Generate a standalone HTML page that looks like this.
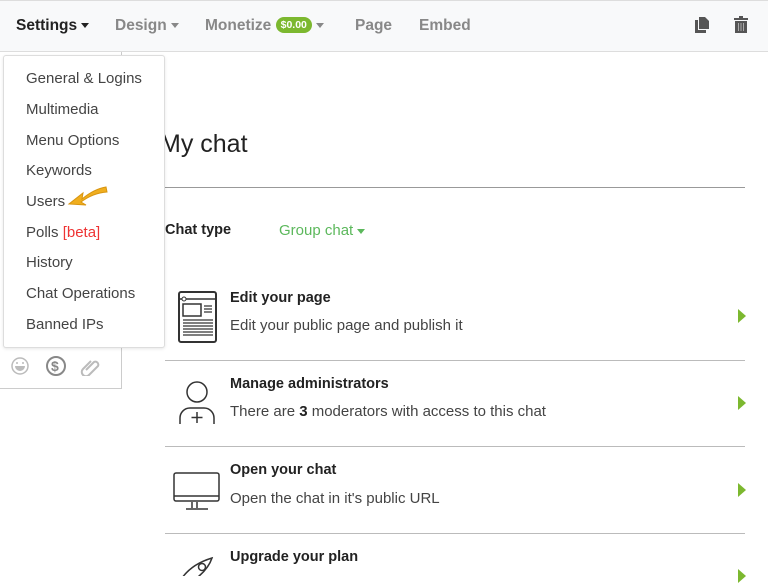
<!DOCTYPE html>
<html><head><style>
body{margin:0;width:768px;height:576px;overflow:hidden;background:#fff;font-family:"Liberation Sans",sans-serif;position:relative}
.top{position:absolute;left:0;top:0;width:768px;height:52px;background:#f8f9fa;border-bottom:1px solid #ddd;border-top:1px solid #ddd;box-sizing:border-box}
.nav{position:absolute;top:17px;font-size:15.5px;font-weight:bold;color:#888}
.car{display:inline-block;width:0;height:0;border-left:4px solid transparent;border-right:4px solid transparent;border-top:5px solid currentColor;vertical-align:middle;margin-left:4px}
.badge{display:inline-block;background:#7cb82f;color:#fff;font-size:10.5px;border-radius:8px;padding:2px 5px;vertical-align:2px}
.abs{position:absolute}
.dd{position:absolute;left:3px;top:55px;width:160px;height:291px;background:#fff;border:1px solid #ddd;border-radius:3px;box-shadow:0 1px 3px rgba(0,0,0,.1)}
.dd div{position:absolute;left:22px;font-size:15px;color:#444}
.t{position:absolute;left:230px;font-size:14.5px;font-weight:bold;color:#222}
.s{position:absolute;left:230px;font-size:15px;color:#444}
.hr{position:absolute;left:165px;width:580px;height:1px;background:#bbb}
.arr{position:absolute;left:738px;width:0;height:0;border-top:7px solid transparent;border-bottom:7px solid transparent;border-left:8px solid #7cb82f}
</style></head><body>
<div class="top"></div>
<div class="nav" style="left:16px;color:#222">Settings<span class="car"></span></div>
<div class="nav" style="left:115px">Design<span class="car"></span></div>
<div class="nav" style="left:205px">Monetize <span class="badge">$0.00</span><span class="car"></span></div>
<div class="nav" style="left:355px">Page</div>
<div class="nav" style="left:419px">Embed</div>
<svg class="abs" style="left:694px;top:16px" width="16" height="18" viewBox="0 0 16 18"><path d="M1 4h3v10h8v3H1z" fill="#555"/><path d="M5 1h6l4 4v8H5z" fill="#555"/></svg>
<svg class="abs" style="left:733px;top:16px" width="16" height="18" viewBox="0 0 16 18"><rect x="1" y="2" width="14" height="2" fill="#555"/><rect x="6" y="0" width="4" height="2" fill="#555"/><path d="M2 5h12v12H2z" fill="#555"/><path d="M5.5 7v8M8 7v8M10.5 7v8" stroke="#aaa" stroke-width="1"/></svg>
<div class="abs" style="left:0;top:52px;width:121px;height:336px;border-right:1px solid #ccc;border-bottom:1px solid #ccc"></div>
<svg class="abs" style="left:10px;top:356px" width="100" height="20"><circle cx="10" cy="10" r="8" fill="none" stroke="#bbb" stroke-width="1.5"/><path d="M5 10a5 5 0 0 0 10 0z" fill="#bbb"/><circle cx="7" cy="7" r="1" fill="#bbb"/><circle cx="13" cy="7" r="1" fill="#bbb"/><circle cx="46" cy="10" r="9" fill="none" stroke="#888" stroke-width="2"/><text x="41" y="15" font-size="14" font-weight="bold" fill="#888" font-family="Liberation Sans">$</text><path d="M76 14l8-8a3 3 0 0 1 4 4l-9 9a4 4 0 0 1-6-6l8-8" fill="none" stroke="#bbb" stroke-width="2"/></svg>
<div class="abs" style="left:160px;top:130px;font-size:25px;color:#222">My chat</div>
<div class="abs" style="left:165px;top:187px;width:580px;height:1px;background:#999"></div>
<div class="abs" style="left:165px;top:222px;font-size:14.5px;font-weight:bold;color:#222">Chat type</div>
<div class="abs" style="left:279px;top:222px;font-size:15px;color:#5cb85c">Group chat<span class="car"></span></div>
<svg class="abs" style="left:178px;top:291px" width="40" height="53" viewBox="0 0 40 53"><rect x="1" y="1" width="37" height="50" rx="2" fill="none" stroke="#333" stroke-width="2"/><path d="M1 8h37" stroke="#333" stroke-width="1.5"/><circle cx="6" cy="8" r="2" fill="#fff" stroke="#333"/><rect x="5" y="13" width="18" height="12" fill="none" stroke="#333" stroke-width="1.5"/><path d="M26 15h8M26 18h8M26 21h8M5 29h30M5 32h30M5 35h30M5 38h30M5 41h30M5 44h30" stroke="#333" stroke-width="1.3"/></svg>
<div class="t" style="top:290px">Edit your page</div>
<div class="s" style="top:317px">Edit your public page and publish it</div>
<div class="arr" style="top:309px"></div>
<div class="hr" style="top:360px"></div>
<svg class="abs" style="left:178px;top:380px" width="38" height="46" viewBox="0 0 38 46"><circle cx="19" cy="12" r="10" fill="none" stroke="#333" stroke-width="1.5"/><path d="M2 44v-6a10 10 0 0 1 10-10h14a10 10 0 0 1 10 10v6" fill="none" stroke="#333" stroke-width="1.5"/><path d="M19 32v11M13.5 37.5h11" stroke="#333" stroke-width="1.5"/></svg>
<div class="t" style="top:376px">Manage administrators</div>
<div class="s" style="top:403px">There are <b style="color:#222">3</b> moderators with access to this chat</div>
<div class="arr" style="top:396px"></div>
<div class="hr" style="top:446px"></div>
<svg class="abs" style="left:173px;top:472px" width="48" height="40" viewBox="0 0 48 40"><rect x="1" y="1" width="45" height="28" rx="2" fill="none" stroke="#333" stroke-width="1.5"/><path d="M1 24h45M19 30v6M24 30v6M13 37h22" stroke="#333" stroke-width="1.5"/></svg>
<div class="t" style="top:462px">Open your chat</div>
<div class="s" style="top:490px">Open the chat in it's public URL</div>
<div class="arr" style="top:483px"></div>
<div class="hr" style="top:533px"></div>
<svg class="abs" style="left:178px;top:556px" width="40" height="20" viewBox="0 0 40 20"><path d="M4 22q10-14 30-20q-4 12-18 22" fill="none" stroke="#333" stroke-width="1.5"/><circle cx="24" cy="11" r="3.5" fill="none" stroke="#333" stroke-width="1.5"/></svg>
<div class="t" style="top:549px">Upgrade your plan</div>
<div class="arr" style="top:569px"></div>
<div class="dd">
<div style="top:14px">General &amp; Logins</div>
<div style="top:45px">Multimedia</div>
<div style="top:76px">Menu Options</div>
<div style="top:106px">Keywords</div>
<div style="top:137px">Users</div>
<div style="top:168px">Polls <span style="color:#e33">[beta]</span></div>
<div style="top:198px">History</div>
<div style="top:229px">Chat Operations</div>
<div style="top:260px">Banned IPs</div>
</div>
<svg class="abs" style="left:66px;top:183px" width="46" height="26" viewBox="0 0 46 26"><path d="M40 4q-12 2-24 12l1-6-14 11 17 1-5-3q12-9 26-10z" fill="#f0ae1e" stroke="#d89510" stroke-width="1"/></svg>
</body></html>
